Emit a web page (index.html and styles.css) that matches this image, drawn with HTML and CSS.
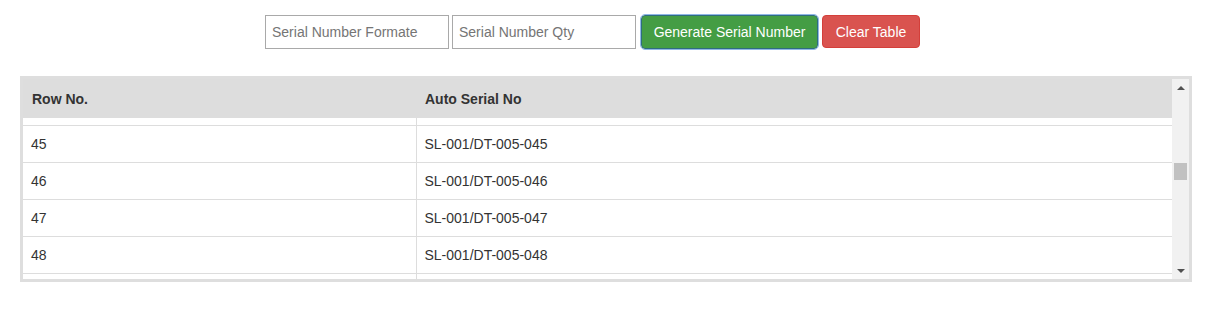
FILE: index.html
```html
<!DOCTYPE html>
<html lang="en">
<head>
  <meta charset="UTF-8" />
  <title>Auto Serial Number</title>
  <meta name="viewport" content="width=device-width, initial-scale=1.0" />
  <link rel="stylesheet" href="styles.css">
</head>
<body>

  <div class="controls">
    <input type="text" id="format" placeholder="Serial Number Formate" />
    <input type="text" id="qty" placeholder="Serial Number Qty" />
    <button class="btn btn-success">Generate Serial Number</button>
    <button class="btn btn-danger">Clear Table</button>
  </div>

  <div class="table-frame">
    <div class="table-view">
      <table class="serial-table head">
        <tr>
          <th class="col-row">Row No.</th>
          <th>Auto Serial No</th>
        </tr>
      </table>
      <div class="rows-view">
        <table class="serial-table rows">
          <tr><td class="col-row"></td><td></td></tr>
          <tr><td class="col-row">45</td><td>SL-001/DT-005-045</td></tr>
          <tr><td class="col-row">46</td><td>SL-001/DT-005-046</td></tr>
          <tr><td class="col-row">47</td><td>SL-001/DT-005-047</td></tr>
          <tr><td class="col-row">48</td><td>SL-001/DT-005-048</td></tr>
          <tr><td class="col-row"></td><td></td></tr>
        </table>
      </div>
    </div>
    <div class="scrollbar">
      <div class="sb-btn sb-up"></div>
      <div class="sb-track">
        <div class="sb-thumb"></div>
      </div>
      <div class="sb-btn sb-down"></div>
    </div>
  </div>

</body>
</html>
```

FILE: styles.css
```css
body {
  margin: 0;
  font-family: "Liberation Sans", Arial, sans-serif;
  font-size: 14px;
  color: #333;
  background: #fff;
}

.controls {
  display: flex;
  align-items: flex-start;
  padding: 15px 0 0 265px;
  height: 34px;
}

.controls input {
  box-sizing: border-box;
  width: 184px;
  height: 34px;
  margin-right: 3px;
  padding: 1px 6px;
  border: 1px solid #a9a9a9;
  font-family: inherit;
  font-size: 14px;
  color: #333;
}

.controls input::placeholder {
  color: #757575;
}

.btn {
  box-sizing: border-box;
  height: 34px;
  padding: 6px 0;
  border: 1px solid transparent;
  border-radius: 4px;
  font-family: inherit;
  font-size: 14px;
  line-height: 20px;
  color: #fff;
  text-align: center;
  cursor: pointer;
}

.btn-success {
  width: 177px;
  margin-left: 2px;
  background-color: #449d44;
  border-color: #2f6d7f;
  outline: 1px solid #8fb7e6;
}

.btn-danger {
  width: 98px;
  height: 33px;
  margin-left: 4px;
  background-color: #d9534f;
  border-color: #d43f3a;
}

/* table box with its own scrollbar */
.table-frame {
  display: flex;
  width: 1166px;
  height: 200px;
  margin: 27px 0 0 20px;
  border: 3px solid #dedede;
}

.table-view {
  flex: 1;
  display: flex;
  flex-direction: column;
  min-width: 0;
}

.rows-view {
  flex: 1;
  overflow: hidden;
}

.serial-table {
  width: 100%;
  border-collapse: collapse;
  table-layout: fixed;
}

.serial-table th {
  height: 39px;
  padding: 0 9px;
  box-sizing: border-box;
  background: #dddddd;
  text-align: left;
  font-weight: bold;
  line-height: 20px;
}

.serial-table .col-row {
  width: 393px;
  box-sizing: border-box;
}

.serial-table td {
  height: 37px;
  padding: 0 8px;
  line-height: 20px;
  border: 1px solid #dddddd;
  border-top: none;
  box-sizing: border-box;
}

.serial-table td:first-child {
  border-left: none;
}

.serial-table td:last-child {
  border-right: none;
}

.rows {
  margin-top: -30px;
}

/* scrollbar */
.scrollbar {
  display: flex;
  flex-direction: column;
  width: 17px;
  background: #f1f1f1;
}

.sb-btn {
  height: 17px;
  display: flex;
  align-items: center;
  justify-content: center;
}

.sb-btn::before {
  content: "";
  width: 0;
  height: 0;
  border-left: 4px solid transparent;
  border-right: 4px solid transparent;
}

.sb-up::before {
  border-bottom: 4px solid #505050;
}

.sb-down::before {
  border-top: 4px solid #505050;
}

.sb-track {
  flex: 1;
}

.sb-thumb {
  height: 17px;
  margin: 67px 2px 0;
  background: #c1c1c1;
}
```
